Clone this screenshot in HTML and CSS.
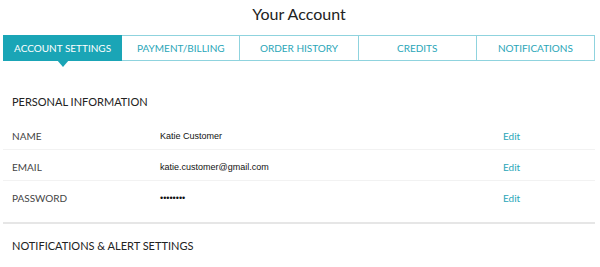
FILE: index.html
```html
<!DOCTYPE html>
<html lang="en">
<head>
  <meta charset="UTF-8" />
  <title>Your Account</title>
  <link rel="stylesheet" href="styles.css">
</head>
<body>
  <div class="page">
    <h1 class="title">Your Account</h1>

    <nav class="tabs">
      <a class="tab active" href="#">Account Settings</a>
      <a class="tab" href="#">Payment/Billing</a>
      <a class="tab" href="#">Order History</a>
      <a class="tab" href="#">Credits</a>
      <a class="tab" href="#">Notifications</a>
    </nav>

    <section class="section">
      <h2 class="section-title">Personal Information</h2>
      <div class="row">
        <div class="label">Name</div>
        <div class="value">Katie Customer</div>
        <a class="edit" href="#">Edit</a>
      </div>
      <div class="row">
        <div class="label">Email</div>
        <div class="value">katie.customer@gmail.com</div>
        <a class="edit" href="#">Edit</a>
      </div>
      <div class="row last">
        <div class="label">Password</div>
        <div class="value">&bull;&bull;&bull;&bull;&bull;&bull;&bull;&bull;</div>
        <a class="edit" href="#">Edit</a>
      </div>
    </section>

    <section class="section">
      <h2 class="section-title next">Notifications &amp; Alert Settings</h2>
    </section>
  </div>
</body>
</html>
```

FILE: styles.css
```css
body {
  margin: 0;
  padding: 0;
  background-color: #fff;
  font-family: 'Lato', sans-serif;
  color: #333;
}

.page {
  width: 592px;
  margin-left: 3px;
}

.title {
  margin: 0;
  height: 35px;
  line-height: 27px;
  text-align: center;
  font-size: 16px;
  font-weight: normal;
  color: #222;
}

.tabs {
  display: flex;
  height: 26px;
}

.tab {
  position: relative;
  flex: 1;
  display: flex;
  align-items: center;
  justify-content: center;
  border: 1px solid #8fd3de;
  border-left: none;
  color: #2aa6b8;
  text-decoration: none;
  text-transform: uppercase;
  font-size: 10px;
}

.tab:first-child {
  border-left: 1px solid #8fd3de;
}

.tab.active {
  background-color: #1aa5b6;
  border-color: #1aa5b6;
  color: #fff;
}

.tab.active::after {
  content: '';
  position: absolute;
  left: 50%;
  bottom: -7px;
  margin-left: -6px;
  border-left: 6px solid transparent;
  border-right: 6px solid transparent;
  border-top: 7px solid #1aa5b6;
}

.section-title {
  margin: 0;
  padding: 34px 9px 11px;
  font-size: 11px;
  font-weight: normal;
  text-transform: uppercase;
  color: #222;
}

.section-title.next {
  padding-top: 15px;
}

.row {
  display: flex;
  align-items: center;
  height: 26px;
  padding-top: 4px;
  border-bottom: 1px solid #f2f2f2;
}

.row.last {
  height: 37px;
  align-items: flex-start;
  border-bottom: 2px solid #e6e6e6;
}

.row.last > * {
  line-height: 26px;
}

.label {
  width: 148px;
  padding-left: 9px;
  font-size: 10px;
  text-transform: uppercase;
  color: #444;
}

.value {
  flex: 1;
  font-family: 'Liberation Sans', Arial, sans-serif;
  font-size: 9px;
  color: #111;
}

.edit {
  width: 92px;
  color: #2aa6b8;
  text-decoration: none;
  font-size: 10px;
}
```
